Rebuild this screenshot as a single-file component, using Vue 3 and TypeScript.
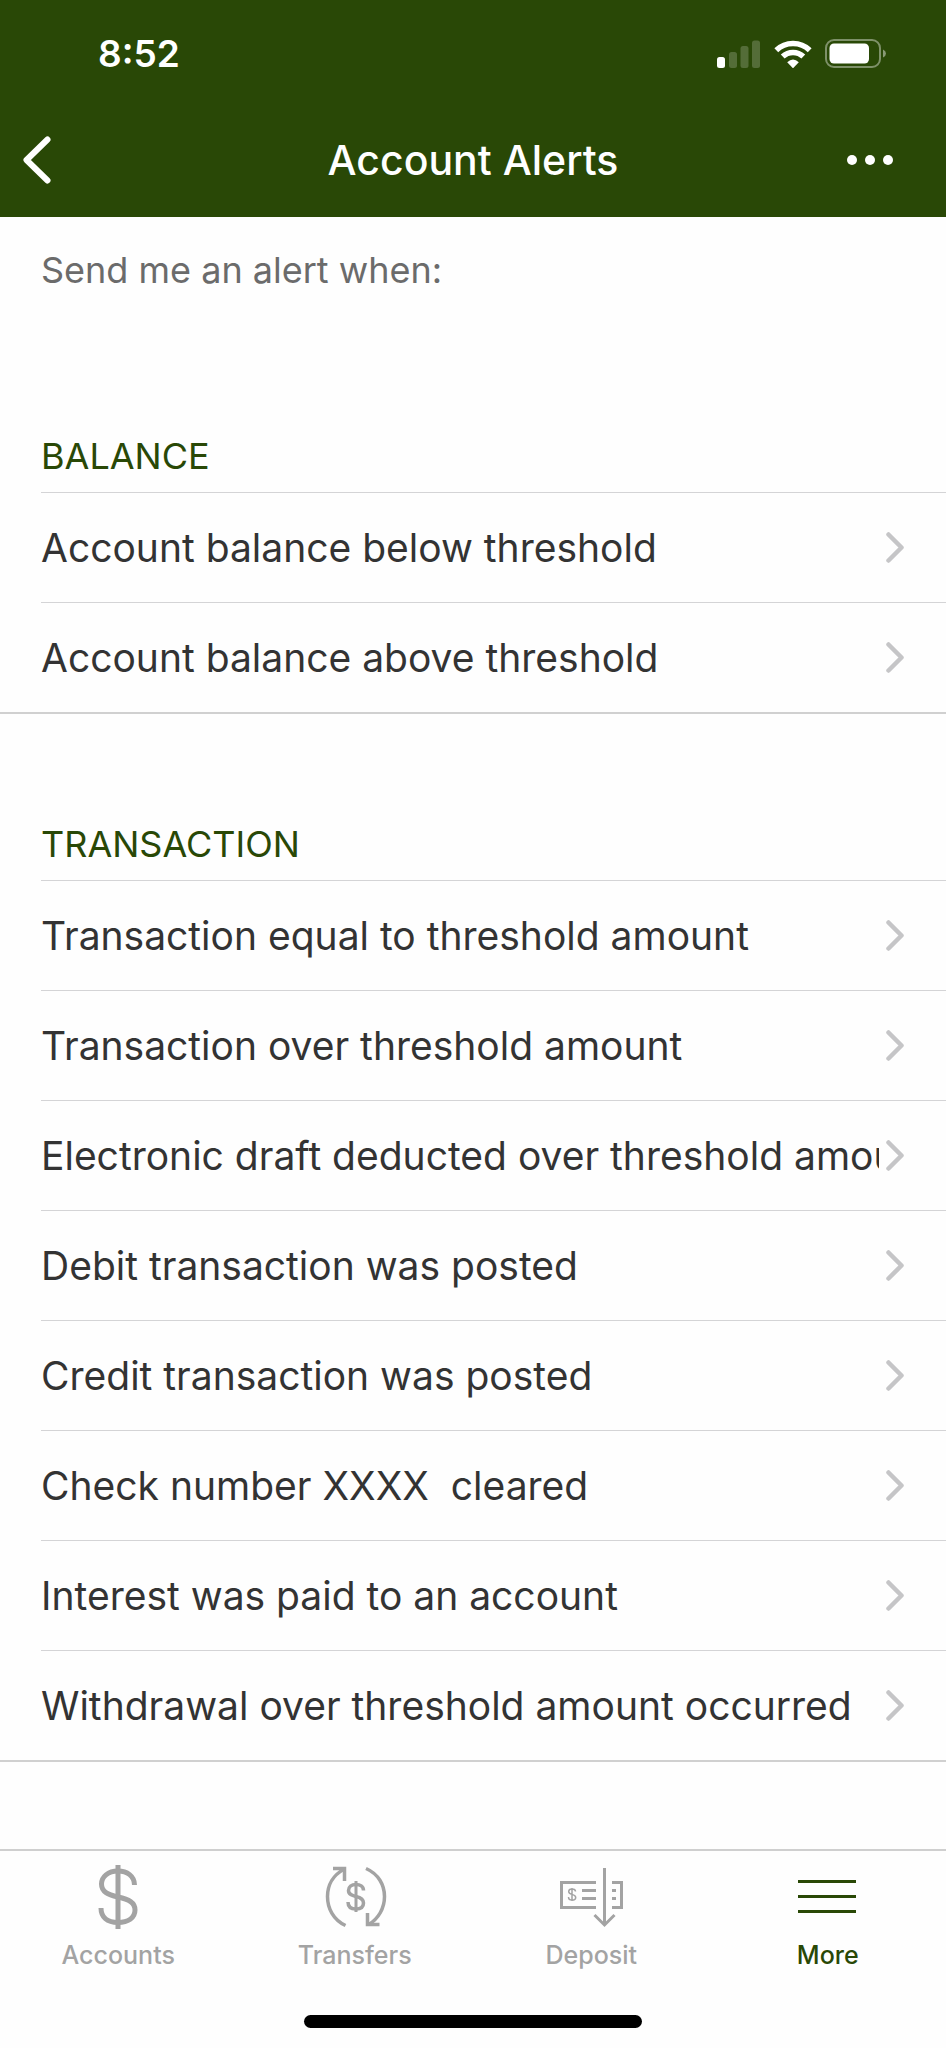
<script setup lang="ts">
interface AlertSection {
  title: string
  items: string[]
}

const sections: AlertSection[] = [
  {
    title: 'BALANCE',
    items: ['Account balance below threshold', 'Account balance above threshold'],
  },
  {
    title: 'TRANSACTION',
    items: [
      'Transaction equal to threshold amount',
      'Transaction over threshold amount',
      'Electronic draft deducted over threshold amount',
      'Debit transaction was posted',
      'Credit transaction was posted',
      'Check number XXXX  cleared',
      'Interest was paid to an account',
      'Withdrawal over threshold amount occurred',
    ],
  },
]
</script>

<template>
  <div class="screen">
    <header class="top">
      <div class="status">
        <span class="time">8:52</span>
        <div class="indicators">
          <svg width="44" height="28" viewBox="0 0 44 28" aria-hidden="true">
            <rect x="0" y="17" width="8" height="11" rx="2.5" fill="#fff" />
            <g fill="#fff" opacity="0.2">
              <rect x="12" y="12" width="8" height="16" rx="2.5" />
              <rect x="23.500" y="6" width="8" height="22" rx="2.500" />
              <rect x="35" y="0.500" width="8" height="27.500" rx="2.500" />
            </g>
          </svg>
          <svg width="38" height="28" viewBox="0 0 38 28" aria-hidden="true">
            <g fill="none" stroke="#fff" stroke-width="5.500">
              <path d="M2.300 10.200A24 24 0 0 1 35.700 10.200" />
              <path d="M8.700 16.600A15 15 0 0 1 29.300 16.600" />
            </g>
            <path d="M19 28.300L13.200 22.300Q19 16.900 24.800 22.300Z" fill="#fff" />
          </svg>
          <svg width="62" height="30" viewBox="0 0 62 30" aria-hidden="true">
            <rect x="1" y="1" width="54" height="27" rx="8" fill="none" stroke="#fff" stroke-opacity="0.4" stroke-width="2" />
            <rect x="4.500" y="4.500" width="39.500" height="20" rx="4.500" fill="#fff" />
            <path d="M58 10.500Q61 12 61 14.500Q61 17 58 18.500Z" fill="#fff" fill-opacity="0.45" />
          </svg>
        </div>
      </div>
      <nav class="navbar">
        <button class="bar-button" type="button" aria-label="Back">
          <svg width="32" height="52" viewBox="0 0 32 52" aria-hidden="true">
            <path d="M26.500 5.500L5.500 26L26.500 46.500" fill="none" stroke="#fff" stroke-width="6" stroke-linecap="round" stroke-linejoin="round" />
          </svg>
        </button>
        <h1 class="title">Account Alerts</h1>
        <button class="bar-button menu" type="button" aria-label="More options">
          <svg width="46" height="12" viewBox="0 0 46 12" fill="#fff" aria-hidden="true">
            <circle cx="5" cy="6" r="5" />
            <circle cx="23" cy="6" r="5" />
            <circle cx="41" cy="6" r="5" />
          </svg>
        </button>
      </nav>
    </header>

    <main class="content">
      <p class="intro">Send me an alert when:</p>
      <section v-for="section in sections" :key="section.title" class="section">
        <h2 class="heading">{{ section.title }}</h2>
        <ul class="list">
          <li v-for="item in section.items" :key="item" class="item">
            <button class="row" type="button">
              <span class="label">{{ item }}</span>
              <svg class="chevron" width="18" height="32" viewBox="0 0 18 32" aria-hidden="true">
                <path d="M2.500 2.500L15.500 15.500L2.500 28.500" fill="none" stroke="#c5c5c7" stroke-width="4.500" stroke-linecap="round" stroke-linejoin="round" />
              </svg>
            </button>
          </li>
        </ul>
      </section>
    </main>

    <footer class="bottom">
      <nav class="tabs">
        <a class="tab" href="#accounts">
          <svg width="64" height="64" viewBox="0 0 64 64" fill="none" stroke="currentColor" stroke-width="5" aria-hidden="true">
            <path d="M32 0V64" />
            <path d="M48.500 20C48.500 11 41 6 32 6C22 6 15.500 12 15.500 19C15.500 27 22 29.500 32 32C43 34.500 49 37.500 49 45C49 53 42 57.500 32 57.500C21 57.500 15 52 15 43" />
          </svg>
          <span>Accounts</span>
        </a>
        <a class="tab" href="#transfers">
          <svg width="64" height="64" viewBox="0 0 64 64" fill="none" stroke="currentColor" stroke-width="3.500" aria-hidden="true">
            <path d="M22.500 60.500C10 54.500 4.500 43 4.500 31.500C4.500 20 10.500 10 20.500 4.500" />
            <path d="M10 3.500H21.500V16" />
            <path d="M43 3.500C55.500 9 61.500 20 61.500 31.500C61.500 43 55.500 54 45.500 59.500" />
            <path d="M44.500 48V59.500H56.500" />
            <path d="M33 16V47" stroke-width="3" />
            <path d="M40.500 25.500C40.500 21.500 37 19.500 33 19.500C28.500 19.500 25.500 22 25.500 25.500C25.500 29.500 29 30.500 33 31.500C37.500 32.500 40.500 34 40.500 38C40.500 42 37.500 44 33 44C28 44 25 41.500 25 37" stroke-width="3.500" />
          </svg>
          <span>Transfers</span>
        </a>
        <a class="tab" href="#deposit">
          <svg width="64" height="64" viewBox="0 0 64 64" fill="none" stroke="currentColor" stroke-width="3" aria-hidden="true">
            <path d="M37 17.500H2.500V42.500H37M53 17.500H62.500V42.500H53" />
            <path d="M23 25.500H37M23 33.500H37M53 25.500H57M53 33.500H57" />
            <path d="M45.500 3V60" />
            <path d="M35.500 50L45.500 60L55.500 50" />
            <path d="M13 23V36M16.500 26.500C16.500 24.500 15 23.900 13 23.900C11 23.900 9.700 25 9.700 26.500C9.700 28.300 11.200 28.900 13 29.400C15.200 30 16.700 30.500 16.700 32.400C16.700 34.200 15.100 35.100 13 35.100C10.800 35.100 9.500 34 9.500 32" stroke-width="1.500" />
          </svg>
          <span>Deposit</span>
        </a>
        <a class="tab active" href="#more" aria-current="page">
          <svg width="64" height="64" viewBox="0 0 64 64" fill="none" stroke="currentColor" stroke-width="3" aria-hidden="true">
            <path d="M2 16.500H60M2 31.500H60M2 46.500H60" />
          </svg>
          <span>More</span>
        </a>
      </nav>
      <div class="home-indicator"></div>
    </footer>
  </div>
</template>

<style>
body {
  margin: 0;
  background: #fefefe;
}
</style>

<style scoped>
.screen {
  display: flex;
  flex-direction: column;
  min-height: 100vh;
  background: #fefefe;
  color: #333;
  font-family: Inter, "Liberation Sans", sans-serif;
}

button {
  border: 0;
  padding: 0;
  background: none;
  color: inherit;
  font: inherit;
  cursor: pointer;
}

.top {
  background: #294806;
  color: #fff;
  padding-bottom: 5px;
}

.status {
  display: flex;
  align-items: center;
  justify-content: space-between;
  height: 107px;
  padding: 0 59px 0 98px;
}

.time {
  font-size: 37px;
  font-weight: 600;
}

.indicators {
  display: flex;
  align-items: center;
  gap: 13px;
}

.navbar {
  display: grid;
  grid-template-columns: 1fr auto 1fr;
  align-items: center;
  height: 105px;
  padding: 0 53px 0 21px;
}

.bar-button {
  display: flex;
  justify-self: start;
}

.menu {
  justify-self: end;
}

.title {
  margin: 0;
  padding-left: 32px;
  font-size: 41px;
  font-weight: 500;
}

.content {
  flex: 1;
}

.intro {
  margin: 0;
  padding: 29px 41px 30px;
  color: #6b6b6b;
  font-size: 36px;
  line-height: 48px;
}

.heading {
  margin: 0;
  padding: 108px 41px 12px;
  color: #294806;
  font-size: 36px;
  font-weight: 400;
  line-height: 48px;
}

.section + .section {
  border-top: 2px solid #d0d0d0;
}

.section + .section .heading {
  padding-top: 106px;
}

.section:last-child {
  border-bottom: 2px solid #d0d0d0;
}

.list {
  list-style: none;
  margin: 0;
  padding: 0 0 0 41px;
}

.item {
  border-top: 1px solid #d4d4d6;
}

.row {
  display: flex;
  align-items: center;
  gap: 7px;
  width: 100%;
  height: 109px;
  padding-right: 42px;
  text-align: left;
}

.label {
  flex: 1;
  min-width: 0;
  overflow: hidden;
  white-space: pre;
  font-size: 39px;
  line-height: 52px;
}

.chevron {
  flex: none;
}

.bottom {
  border-top: 2px solid #cfcfcf;
}

.tabs {
  display: grid;
  grid-template-columns: repeat(4, 1fr);
}

.tab {
  display: flex;
  flex-direction: column;
  align-items: center;
  gap: 10px;
  padding-top: 14px;
  color: #a3a3a3;
  font-size: 25px;
  font-weight: 500;
  line-height: 32px;
  text-decoration: none;
}

.active {
  color: #294806;
}

.home-indicator {
  width: 338px;
  height: 13px;
  margin: 44px auto 20px;
  border-radius: 7px;
  background: #000;
}
</style>
